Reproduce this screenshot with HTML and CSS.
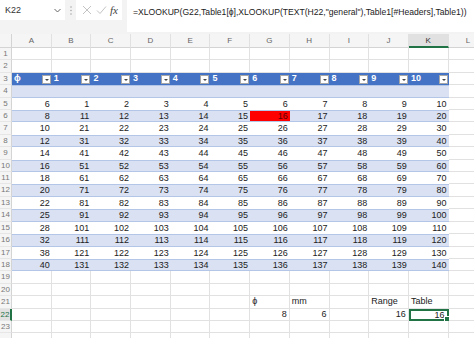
FILE: index.html
```html
<!DOCTYPE html>
<html lang="en">
<head>
    <meta charset="UTF-8">
    <title>XLOOKUP sheet</title>
    <link rel="stylesheet" href="styles.css">
</head>
<body>
    <div class="topbar">
        <div class="namebox">
            <span>K22</span>
            <svg width="7" height="5" viewBox="0 0 7 5"><path d="M0.5 1 L3.5 4 L6.5 1" fill="none" stroke="#666" stroke-width="1"/></svg>
        </div>
        <div class="dots">
            <svg width="2" height="9" viewBox="0 0 2 9"><circle cx="1" cy="1" r="0.7" fill="#999"/><circle cx="1" cy="4.5" r="0.7" fill="#999"/><circle cx="1" cy="8" r="0.7" fill="#999"/></svg>
        </div>
        <div class="fxbox">
            <svg width="10" height="10" viewBox="0 0 10 10"><path d="M1 1 L9 9 M9 1 L1 9" stroke="#c3c3c3" stroke-width="1"/></svg>
            <svg width="11" height="10" viewBox="0 0 11 10"><path d="M1 5.5 L4 8.5 L10 1.5" fill="none" stroke="#c3c3c3" stroke-width="1"/></svg>
            <span class="fx">fx</span>
        </div>
        <div class="formula">=XLOOKUP(G22,Table1[ϕ],XLOOKUP(TEXT(H22,"general"),Table1[#Headers],Table1))</div>
    </div>

    <div id="sheet" class="sheet"></div>

    <script>
        const colonnes = ['A', 'B', 'C', 'D', 'E', 'F', 'G', 'H', 'I', 'J', 'K', 'L'];
        const phi = [6, 8, 10, 12, 14, 16, 18, 20, 22, 25, 28, 32, 38, 40];
        const sheet = document.getElementById('sheet');

        // en-têtes de colonnes
        let html = '<div class="row colhead"><div class="rh corner"></div>';
        for (const c of colonnes) {
            html += `<div class="ch${c === 'K' ? ' sel' : ''}">${c}</div>`;
        }
        html += '</div>';

        // valeurs des lignes 21 et 22
        const bas = {
            21: { G: 'ϕ', H: 'mm', J: 'Range', K: 'Table' },
            22: { G: '8', H: '6', J: '16', K: '16' }
        };

        for (let r = 1; r <= 24; r++) {
            let cls = 'row';
            if (r === 3) cls += ' thead';
            else if (r >= 4 && r <= 18) cls += (r % 2 === 0) ? ' band' : ' plain';
            const enTable = r >= 3 && r <= 18;

            // la ligne 24 est coupée par le bas de la fenêtre
            const label = r < 24 ? r : '';
            html += `<div class="${cls}"><div class="rh${r === 22 ? ' sel' : ''}">${label}</div>`;
            if (enTable) html += '<div class="tbl">';

            colonnes.forEach((c, i) => {
                if (c === 'L' && enTable) html += '</div>';
                let texte = '';
                let extra = '';
                if (r === 3 && i <= 10) {
                    texte = i === 0 ? 'ϕ' : String(i);
                    extra = ' head';
                    texte = `<span>${texte}</span><span class="filtre"></span>`;
                } else if (r >= 5 && r <= 18 && i <= 10) {
                    texte = i === 0 ? phi[r - 5] : (r - 5) * 10 + i;
                    extra = ' num';
                    if (r === 6 && c === 'G') extra += ' rouge';
                } else if (bas[r] && bas[r][c]) {
                    texte = bas[r][c];
                    extra = r === 21 ? ' txt' : ' num';
                    if (r === 22 && c === 'K') extra += ' actif';
                }
                html += `<div class="cell${extra}">${texte}</div>`;
            });
            html += '</div>';
        }

        sheet.innerHTML = html;
    </script>
</body>
</html>
```

FILE: styles.css
```css
body {
    margin: 0;
    background-color: #fff;
    font-family: "Liberation Sans", Arial, sans-serif;
    overflow: hidden;
}
.topbar {
    display: flex;
    align-items: flex-start;
    height: 34px;
    background-color: #f3f3f3;
}
.namebox {
    width: 65px;
    height: 20px;
    box-sizing: border-box;
    padding: 0 4px 0 5px;
    background-color: #fff;
    display: flex;
    align-items: center;
    justify-content: space-between;
    font-size: 9px;
    color: #333;
}
.dots {
    width: 11px;
    height: 20px;
    display: flex;
    align-items: center;
    justify-content: center;
}
.fxbox {
    width: 46px;
    height: 20px;
    box-sizing: border-box;
    padding: 0 4px 0 6px;
    background-color: #fff;
    display: flex;
    align-items: center;
    justify-content: space-between;
}
.fx {
    font-family: "Liberation Serif", serif;
    font-style: italic;
    font-size: 11px;
    color: #444;
}
.formula {
    margin-left: 5px;
    flex: 1;
    height: 32px;
    box-sizing: border-box;
    padding: 7px 0 0 6px;
    background-color: #fff;
    font-size: 8.6px;
    color: #222;
    white-space: nowrap;
    overflow: hidden;
}
.sheet {
    font-size: 9px;
    color: #222;
}
.row {
    display: flex;
    height: 12.42px;
}
.rh {
    width: 12px;
    flex: none;
    box-sizing: border-box;
    border-right: 1px solid #d4d4d4;
    border-bottom: 1px solid #e6e6e6;
    background-color: #f5f5f5;
    font-size: 8px;
    color: #777;
    text-align: center;
    line-height: 12px;
    overflow: hidden;
}
.rh.sel {
    border-right: 2px solid #217346;
    background-color: #e1e1e1;
    color: #217346;
}
.colhead {
    height: 14px;
}
.colhead .rh {
    border-bottom: 1px solid #d4d4d4;
}
.ch {
    width: 39.7px;
    flex: none;
    box-sizing: border-box;
    border-right: 1px solid #e1e1e1;
    border-bottom: 1px solid #d4d4d4;
    background-color: #f5f5f5;
    font-size: 8px;
    color: #666;
    text-align: center;
    line-height: 14px;
}
.ch.sel {
    background-color: #e1e1e1;
    border-bottom: 2px solid #217346;
    color: #333;
}
.cell {
    position: relative;
    width: 39.7px;
    flex: none;
    box-sizing: border-box;
    border-right: 1px solid #e1e1e1;
    border-bottom: 1px solid #e1e1e1;
    padding: 0 2px;
    line-height: 11.5px;
    white-space: nowrap;
}
.num {
    text-align: right;
}
.txt {
    text-align: left;
}
.tbl {
    display: flex;
    box-sizing: border-box;
}
.tbl .cell {
    border: none;
}
.thead .tbl {
    background-color: #4472c4;
}
.band .tbl {
    background-color: #d9e1f2;
    border-bottom: 1px solid #b4c6e7;
    border-top: 1px solid #b4c6e7;
}
.plain .tbl .cell {
    line-height: 12.4px;
}
.band .tbl .cell {
    line-height: 10.4px;
}
.head {
    display: flex;
    justify-content: space-between;
    align-items: center;
    padding: 0 1px 0 2px;
    color: #fff;
    font-weight: bold;
}
.filtre {
    width: 9px;
    height: 9px;
    box-sizing: border-box;
    background-color: #fff;
    border: 1px solid #a6a6a6;
    position: relative;
}
.filtre::after {
    content: "";
    position: absolute;
    left: 2px;
    top: 3px;
    border-left: 2px solid transparent;
    border-right: 2px solid transparent;
    border-top: 2px solid #444;
}
.band .tbl .rouge {
    background-color: #ff0000;
    color: #5a0000;
}
.actif {
    border: 2px solid #217346;
    line-height: 8.4px;
}
.actif::after {
    content: "";
    position: absolute;
    right: -3px;
    bottom: -3px;
    width: 4px;
    height: 4px;
    background-color: #217346;
    border: 1px solid #fff;
}
```
